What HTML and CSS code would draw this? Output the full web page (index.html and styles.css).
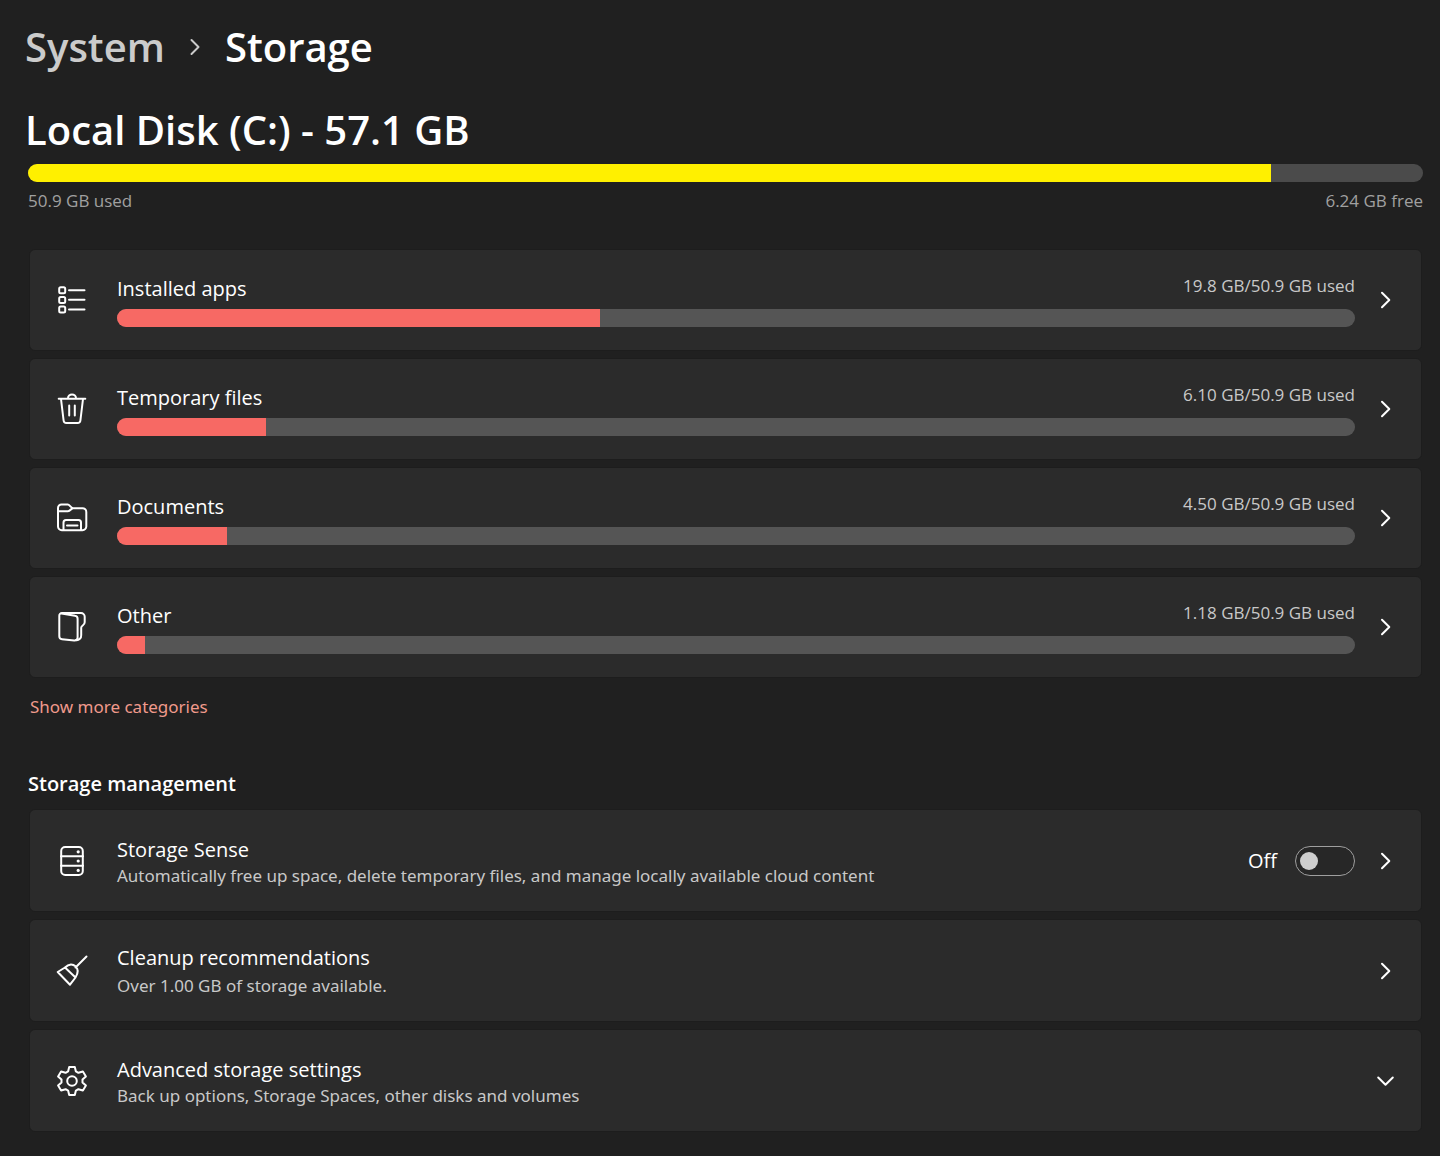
FILE: index.html
```html
<!DOCTYPE html>
<html lang="en">
<head>
<meta charset="utf-8">
<meta name="viewport" content="width=device-width, initial-scale=1">
<title>Storage</title>
<link rel="stylesheet" href="styles.css">
</head>
<body>
<main class="page">
  <nav class="crumbs" aria-label="Breadcrumb">
    <a class="crumb-parent" href="#system">System</a>
    <svg class="crumb-sep" viewBox="0 0 12 18" aria-hidden="true"><path d="M2.500 2l7 7-7 7"/></svg>
    <h1 class="crumb-current">Storage</h1>
  </nav>

  <section class="disk">
    <h2 class="disk-title">Local Disk (C:) - 57.1 GB</h2>
    <div class="bar bar-disk"><div class="bar-fill" style="width: 89.1%"></div></div>
    <div class="disk-legend"><span>50.9 GB used</span><span>6.24 GB free</span></div>
  </section>

  <section class="cards">
    <a class="card" href="#apps">
      <svg class="icon" viewBox="0 0 32 32" aria-hidden="true"><rect x="3.2" y="3.2" width="6" height="6" rx="1.5"/><rect x="3.2" y="12.9" width="6" height="6" rx="1.5"/><rect x="3.2" y="22.4" width="6" height="6" rx="1.5"/><path d="M13 6.2h15.5M13 15.8h15.5M13 25.4h15.5"/></svg>
      <div class="usage">
        <div class="usage-head"><span class="title">Installed apps</span><span class="amount">19.8 GB/50.9 GB used</span></div>
        <div class="bar"><div class="bar-fill" style="width: 39%"></div></div>
      </div>
      <svg class="chevron" viewBox="0 0 20 20" aria-hidden="true"><path d="M6 2.700l7.300 7.300-7.300 7.300"/></svg>
    </a>
    <a class="card" href="#temporary">
      <svg class="icon" viewBox="0 0 32 32" aria-hidden="true"><path d="M2.700 5.700h26.600M12 5.200a4 3.700 0 0 1 8 0M5 6l2.600 21.500a2.800 2.800 0 0 0 2.800 2.500h11.200a2.800 2.800 0 0 0 2.800-2.500L27 6M13.200 12.500v10M18.800 12.500v10"/></svg>
      <div class="usage">
        <div class="usage-head"><span class="title">Temporary files</span><span class="amount">6.10 GB/50.9 GB used</span></div>
        <div class="bar"><div class="bar-fill" style="width: 12%"></div></div>
      </div>
      <svg class="chevron" viewBox="0 0 20 20" aria-hidden="true"><path d="M6 2.700l7.300 7.300-7.300 7.300"/></svg>
    </a>
    <a class="card" href="#documents">
      <svg class="icon" viewBox="0 0 32 32" aria-hidden="true"><path d="M2 9.500V6a3.500 3.500 0 0 1 3.500-3.500h6.200c2 0 2.800 3.200 5.300 3.700h9.500A3.800 3.800 0 0 1 30.300 10v14.400a3.800 3.800 0 0 1-3.800 3.800H5.800A3.800 3.800 0 0 1 2 24.400V9.500M2 9.200h10c2.500 0 2.500-2.600 5-3M7.500 28v-7.500a2.500 2.500 0 0 1 2.500-2.500h12.500a2.500 2.500 0 0 1 2.500 2.500V28M11 23.500h10.500"/></svg>
      <div class="usage">
        <div class="usage-head"><span class="title">Documents</span><span class="amount">4.50 GB/50.9 GB used</span></div>
        <div class="bar"><div class="bar-fill" style="width: 8.9%"></div></div>
      </div>
      <svg class="chevron" viewBox="0 0 20 20" aria-hidden="true"><path d="M6 2.700l7.300 7.300-7.300 7.300"/></svg>
    </a>
    <a class="card" href="#other">
      <svg class="icon" viewBox="0 0 32 32" aria-hidden="true"><path d="M5.500 2.500l13.500 2.300a3 3 0 0 1 2.600 3V26.500a3 3 0 0 1-3.400 3L6 28.200a3 3 0 0 1-2.700-3V5A2.700 2.700 0 0 1 6 2h19a3.700 3.700 0 0 1 3.700 3.700v5.500c0 3.500-3.500 3-3.500 5.500v7.500a4.500 4.500 0 0 1-5.500 4.800"/></svg>
      <div class="usage">
        <div class="usage-head"><span class="title">Other</span><span class="amount">1.18 GB/50.9 GB used</span></div>
        <div class="bar"><div class="bar-fill" style="width: 2.3%"></div></div>
      </div>
      <svg class="chevron" viewBox="0 0 20 20" aria-hidden="true"><path d="M6 2.700l7.300 7.300-7.300 7.300"/></svg>
    </a>
  </section>

  <a class="more" href="#all">Show more categories</a>

  <h2 class="section-title">Storage management</h2>
  <section class="cards cards-manage">
    <div class="card">
      <svg class="icon" viewBox="0 0 32 32" aria-hidden="true"><rect x="5.200" y="2" width="21.600" height="28" rx="4"/><path d="M5 11.300h22M5 20.700h22"/><g class="dots"><circle cx="22.200" cy="6.800" r="1.600"/><circle cx="22.200" cy="16" r="1.600"/><circle cx="22.200" cy="25.400" r="1.600"/></g></svg>
      <div class="info"><label class="title" for="sense">Storage Sense</label><span class="note">Automatically free up space, delete temporary files, and manage locally available cloud content</span></div>
      <div class="switch"><span class="state">Off</span><input class="toggle" id="sense" type="checkbox" role="switch"></div>
      <a class="open" href="#sense-settings" aria-label="Storage Sense settings"><svg class="chevron" viewBox="0 0 20 20" aria-hidden="true"><path d="M6 2.700l7.300 7.300-7.300 7.300"/></svg></a>
    </div>
    <a class="card" href="#cleanup">
      <svg class="icon" viewBox="0 0 32 32" aria-hidden="true"><path d="M30.500 1.500L19.500 12.500M9 12.500c4-4 8-3.500 10.500-1.200 2.600 2.500 3.200 6.200 0 11.200M9 12.500L1.700 17 14 29.700l5.500-7.200zM9 12.500l10.500 10"/></svg>
      <div class="info info-loose"><span class="title">Cleanup recommendations</span><span class="note">Over 1.00 GB of storage available.</span></div>
      <svg class="chevron" viewBox="0 0 20 20" aria-hidden="true"><path d="M6 2.700l7.300 7.300-7.300 7.300"/></svg>
    </a>
    <button class="card" type="button" aria-expanded="false">
      <svg class="icon" viewBox="0 0 32 32" aria-hidden="true"><path d="M13.200 1.900h5.600l1.100 4.500 2.500 1.400 4.500-1.300 3 4.900-3.400 3.200v2.800l3.400 3.200-3 4.900-4.500-1.300-2.500 1.400-1.100 4.500h-5.600l-1.100-4.500-2.500-1.400-4.500 1.300-3-4.900 3.400-3.200v-2.800l-3.400-3.200 3-4.900 4.500 1.300 2.500-1.400z"/><circle cx="16" cy="16" r="4.800"/></svg>
      <span class="info"><span class="title">Advanced storage settings</span><span class="note">Back up options, Storage Spaces, other disks and volumes</span></span>
      <svg class="chevron" viewBox="0 0 20 20" aria-hidden="true"><path d="M2.200 6.500l7.300 7.300 7.300-7.300"/></svg>
    </button>
  </section>
</main>
</body>
</html>
```
FILE: styles.css
```css
* { box-sizing: border-box; }

body {
  margin: 0;
  background: #202020;
  color: #fff;
  font-family: "Open Sans", "Noto Sans", sans-serif;
  font-size: 20px;
  line-height: 28px;
}

h1, h2 { margin: 0; font-weight: 600; }
a { color: inherit; text-decoration: none; }
svg { fill: none; stroke: currentColor; stroke-width: 2; stroke-linecap: round; stroke-linejoin: round; flex: none; }

.page { padding: 20px 17px 24px 28px; }

.crumbs, .disk-title { margin-left: -3px; font-size: 40px; line-height: 54px; font-weight: 600; }
.crumbs { display: flex; align-items: center; }
.crumb-parent { color: #cbcbcb; }
.crumb-sep { width: 12px; height: 18px; margin: 0 24px; color: #cbcbcb; }
.crumb-current { font-size: 40px; line-height: 54px; }

.disk-title { margin-top: 29px; }
.bar { height: 18px; border-radius: 9px; overflow: hidden; background: #555; }
.bar-fill { height: 100%; background: #f76964; }
.bar-disk { margin-top: 7px; background: #4b4b4b; }
.bar-disk .bar-fill { background: #fff000; }
.disk-legend { display: flex; justify-content: space-between; margin-top: 7px; color: #a0a0a0; font-size: 17px; line-height: 24px; }

.cards { display: grid; gap: 7px; margin: 0 1px; }
.disk + .cards { margin-top: 36px; }

.card {
  display: flex;
  align-items: center;
  width: 100%;
  min-height: 102px;
  padding: 0 25px 0 26px;
  border: 1px solid #1d1d1d;
  border-radius: 6px;
  background: #2b2b2b;
  color: #fff;
  font: inherit;
  text-align: left;
}
.cards-manage .card { min-height: 103px; }
.icon { width: 32px; height: 32px; margin-right: 29px; }
.chevron { display: block; width: 20px; height: 20px; margin-left: 21px; }
.usage { flex: 1; padding-top: 2px; }
.usage-head { display: flex; justify-content: space-between; margin-bottom: 6px; }
.amount { color: #c8c8c8; font-size: 17px; line-height: 22px; }
.info { display: flex; flex: 1; flex-direction: column; padding-top: 2px; }
.info-loose { gap: 2px; padding-top: 0; }
.note { color: #c8c8c8; }
.note, .more { font-family: "Noto Sans", sans-serif; font-size: 17px; line-height: 24px; }
.dots { fill: currentColor; stroke: none; }

.switch { display: flex; align-items: center; gap: 18px; }
.toggle {
  display: flex;
  align-items: center;
  appearance: none;
  width: 60px;
  height: 30px;
  margin: 0;
  padding: 0 4px;
  border: 1px solid #9f9f9f;
  border-radius: 15px;
  background: #272727;
}
.toggle::before { content: ""; width: 18px; height: 18px; border-radius: 50%; background: #cfcfcf; }
.toggle:checked { justify-content: flex-end; }

.more { display: inline-block; margin: 17px 2px 0; color: #f09a8c; }
.section-title { margin: 50px 0 11px; font-size: 20px; line-height: 28px; }
```
